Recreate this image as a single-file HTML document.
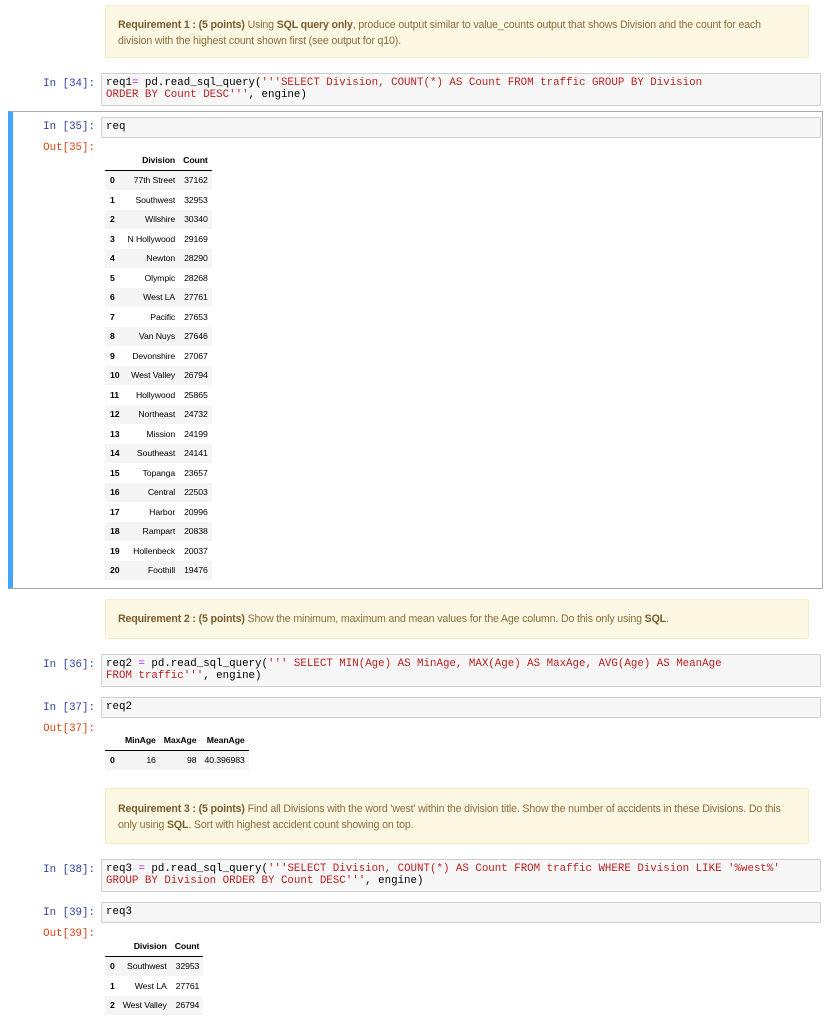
<!DOCTYPE html>
<html><head><style>
body{margin:0;width:831px;height:1024px;background:#fff;position:relative;overflow:hidden;font-family:"Liberation Sans",sans-serif;}
.a{position:absolute;}
.md{position:absolute;left:105px;width:704px;background:#fcf8e3;border:1px solid #f5ecc8;border-radius:2px;box-sizing:border-box;padding:0 12px;color:#8a6d3b;font-size:10.6px;letter-spacing:-0.15px;line-height:16px;}
.md b{color:#7a5c2e}
.inp{position:absolute;left:101px;width:720px;background:#f7f7f7;border:1px solid #cfcfcf;border-radius:2px;box-sizing:border-box;padding:3px 4px 2px;font-family:"Liberation Mono",monospace;font-size:10.8px;line-height:12px;color:#000;white-space:pre;}
.pr{position:absolute;font-family:"Liberation Mono",monospace;font-size:10.8px;color:#303f9f;width:95px;text-align:right;left:0;}
.out{color:#d84315}
.s{color:#ba2121}.o{color:#aa22ff}
table{position:absolute;border-collapse:collapse;font-size:8.7px;letter-spacing:-0.1px;}
td,th{padding:0 4px;height:19.5px;text-align:right;white-space:nowrap}
thead th{border-bottom:1px solid #000;}
tbody tr:nth-child(odd){background:#f5f5f5}
tbody th{text-align:left;padding-left:5px}
</style></head><body>

<div class="md" style="top:5px;height:53px;padding-top:11px">
<b>Requirement 1 : (5 points)</b> Using <b>SQL query only</b>, produce output similar to value_counts output that shows Division and the count for each division with the highest count shown first (see output for q10).</div>

<div class="pr" style="top:78px">In [34]:</div>
<div class="inp" style="top:73px;height:33px">req1<span class="o">=</span> pd.read_sql_query(<span class="s">'''SELECT Division, COUNT(*) AS Count FROM traffic GROUP BY Division
ORDER BY Count DESC'''</span>, engine)</div>

<div class="a" style="left:8px;top:111px;width:815px;height:478px;border:1px solid #aaa;box-sizing:border-box;border-left:5px solid #42a5f5"></div>
<div class="pr" style="top:121px">In [35]:</div>
<div class="inp" style="top:117px;height:21px">req</div>
<div class="pr out" style="top:142px">Out[35]:</div>
<table style="left:105px;top:150px">
<thead><tr><th></th><th>Division</th><th>Count</th></tr></thead>
<tbody>
<tr><th>0</th><td>77th Street</td><td>37162</td></tr>
<tr><th>1</th><td>Southwest</td><td>32953</td></tr>
<tr><th>2</th><td>Wilshire</td><td>30340</td></tr>
<tr><th>3</th><td>N Hollywood</td><td>29169</td></tr>
<tr><th>4</th><td>Newton</td><td>28290</td></tr>
<tr><th>5</th><td>Olympic</td><td>28268</td></tr>
<tr><th>6</th><td>West LA</td><td>27761</td></tr>
<tr><th>7</th><td>Pacific</td><td>27653</td></tr>
<tr><th>8</th><td>Van Nuys</td><td>27646</td></tr>
<tr><th>9</th><td>Devonshire</td><td>27067</td></tr>
<tr><th>10</th><td>West Valley</td><td>26794</td></tr>
<tr><th>11</th><td>Hollywood</td><td>25865</td></tr>
<tr><th>12</th><td>Northeast</td><td>24732</td></tr>
<tr><th>13</th><td>Mission</td><td>24199</td></tr>
<tr><th>14</th><td>Southeast</td><td>24141</td></tr>
<tr><th>15</th><td>Topanga</td><td>23657</td></tr>
<tr><th>16</th><td>Central</td><td>22503</td></tr>
<tr><th>17</th><td>Harbor</td><td>20996</td></tr>
<tr><th>18</th><td>Rampart</td><td>20838</td></tr>
<tr><th>19</th><td>Hollenbeck</td><td>20037</td></tr>
<tr><th>20</th><td>Foothill</td><td>19476</td></tr>
</tbody></table>

<div class="md" style="top:599px;height:40px;padding-top:11px">
<b>Requirement 2 : (5 points)</b> Show the minimum, maximum and mean values for the Age column. Do this only using <b>SQL</b>.</div>

<div class="pr" style="top:659px">In [36]:</div>
<div class="inp" style="top:654px;height:33px">req2 <span class="o">=</span> pd.read_sql_query(<span class="s">''' SELECT MIN(Age) AS MinAge, MAX(Age) AS MaxAge, AVG(Age) AS MeanAge
FROM traffic'''</span>, engine)</div>

<div class="pr" style="top:702px">In [37]:</div>
<div class="inp" style="top:697px;height:21px">req2</div>
<div class="pr out" style="top:723px">Out[37]:</div>
<table style="left:105px;top:730px">
<thead><tr><th style="width:8px"></th><th>MinAge</th><th>MaxAge</th><th>MeanAge</th></tr></thead>
<tbody><tr><th>0</th><td>16</td><td>98</td><td>40.396983</td></tr></tbody></table>

<div class="md" style="top:788px;height:56px;padding-top:12px">
<b>Requirement 3 : (5 points)</b> Find all Divisions with the word 'west' within the division title. Show the number of accidents in these Divisions. Do this only using <b>SQL</b>. Sort with highest accident count showing on top.</div>

<div class="pr" style="top:864px">In [38]:</div>
<div class="inp" style="top:859px;height:33px">req3 <span class="o">=</span> pd.read_sql_query(<span class="s">'''SELECT Division, COUNT(*) AS Count FROM traffic WHERE Division LIKE '%west%'
GROUP BY Division ORDER BY Count DESC'''</span>, engine)</div>

<div class="pr" style="top:907px">In [39]:</div>
<div class="inp" style="top:902px;height:21px">req3</div>
<div class="pr out" style="top:928px">Out[39]:</div>
<table style="left:105px;top:936px">
<thead><tr><th></th><th>Division</th><th>Count</th></tr></thead>
<tbody>
<tr><th>0</th><td>Southwest</td><td>32953</td></tr>
<tr><th>1</th><td>West LA</td><td>27761</td></tr>
<tr><th>2</th><td>West Valley</td><td>26794</td></tr>
</tbody></table>
</body></html>
